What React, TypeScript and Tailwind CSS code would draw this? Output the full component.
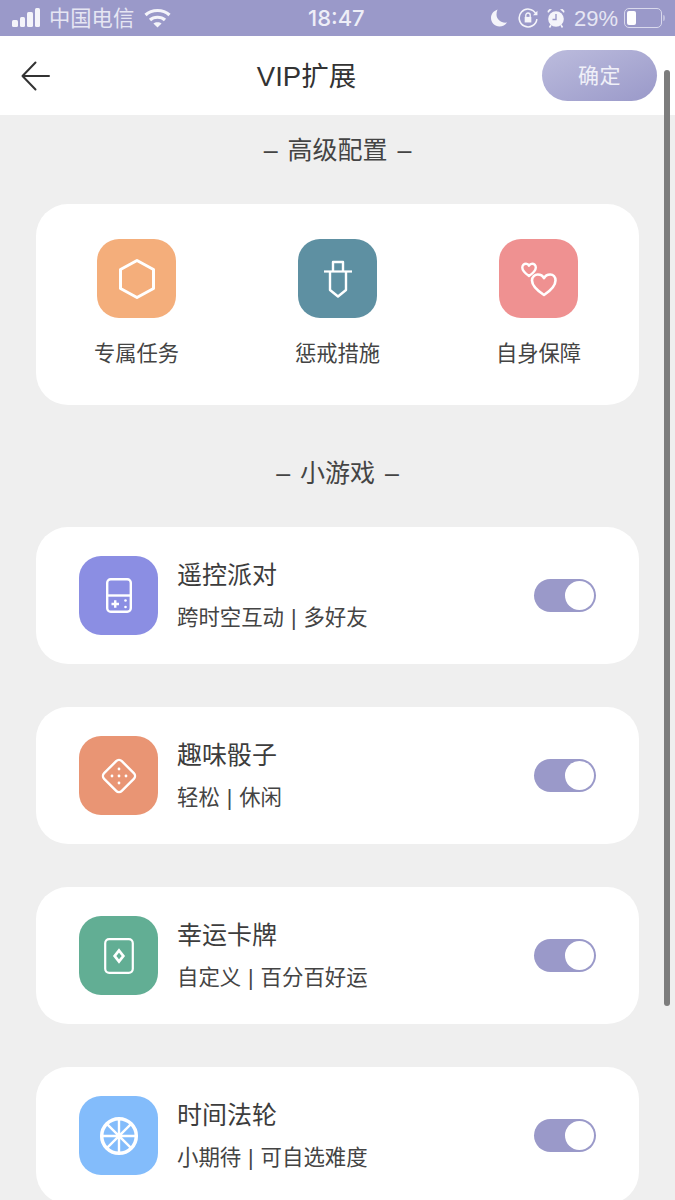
const fontStack = "font-['Liberation_Sans','Noto_Sans_CJK_SC',sans-serif]";

function BackArrow() {
  return (
    <svg width="29" height="30" viewBox="0 0 29 30" fill="none" stroke="#333" strokeWidth="2" strokeLinecap="round" strokeLinejoin="round">
      <path d="M14.5 1.5 L1.5 15 L14.5 28.5 M1.5 15 H28" />
    </svg>
  );
}

function HexIcon() {
  return (
    <svg width="38" height="42" viewBox="0 0 38 42" fill="none" stroke="white" strokeWidth="3" strokeLinejoin="round">
      <path d="M19 2.5 L35.5 11.5 V30.5 L19 39.5 L2.5 30.5 V11.5 Z" />
    </svg>
  );
}

function SwordIcon() {
  return (
    <svg width="30" height="38" viewBox="0 0 30 38" fill="none" stroke="white" strokeWidth="2.4" strokeLinejoin="round">
      <path d="M10 11 V2 H20 V11" />
      <path d="M1 11.5 H29" strokeWidth="2.2" />
      <path d="M7 11.5 V30 L15 36.5 L23 30 V11.5" />
    </svg>
  );
}

function HeartsIcon() {
  return (
    <svg width="36" height="38" viewBox="0 0 36 38" fill="none" stroke="white" strokeLinejoin="round">
      <path strokeWidth="2.4" d="M8 16 C3 12.5 1.3 10 1.3 7.5 C1.3 5.1 3.2 3.7 5 3.7 C6.4 3.7 7.5 4.5 8 5.7 C8.6 4.5 9.8 3.7 11.2 3.7 C13 3.7 14.8 5.1 14.8 7.5 C14.8 10 13 12.5 8 16 Z" />
      <path strokeWidth="2.6" d="M23 35 C14 29 11 25 11 20.5 C11 16.8 13.8 14.5 16.8 14.5 C19.4 14.5 21.8 15.8 23 18.2 C24.2 15.8 26.6 14.5 29.2 14.5 C32.2 14.5 34.5 16.8 34.5 20.5 C34.5 25 32 29 23 35 Z" />
    </svg>
  );
}

function GameIcon() {
  return (
    <svg width="26" height="35" viewBox="0 0 26 35" fill="none" stroke="white" strokeWidth="2.4">
      <rect x="1.2" y="1.2" width="23.6" height="32.6" rx="3.5" />
      <path d="M1.2 17.5 H24.8" />
      <path d="M5.5 26 H13 M9.25 22.2 V29.8" />
      <circle cx="19.5" cy="22.5" r="1.3" fill="white" stroke="none" />
      <circle cx="19.5" cy="29" r="1.3" fill="white" stroke="none" />
    </svg>
  );
}

function DiceIcon() {
  return (
    <svg width="38" height="38" viewBox="0 0 38 38" fill="none" stroke="white" strokeWidth="2.4">
      <rect x="6.5" y="6.5" width="25" height="25" rx="4" transform="rotate(45 19 19)" />
      <g fill="white" stroke="none">
        <circle cx="19" cy="12" r="1.4" />
        <circle cx="12" cy="19" r="1.4" />
        <circle cx="19" cy="19" r="1.4" />
        <circle cx="26" cy="19" r="1.4" />
        <circle cx="19" cy="26" r="1.4" />
      </g>
    </svg>
  );
}

function CardIcon() {
  return (
    <svg width="30" height="36" viewBox="0 0 30 36" fill="none" stroke="white" strokeWidth="2.2">
      <rect x="1.2" y="1.2" width="27.6" height="33.6" rx="4" />
      <path d="M15 12.5 L19.3 18 L15 23.5 L10.7 18 Z" strokeWidth="2.8" />
    </svg>
  );
}

function WheelIcon() {
  return (
    <svg width="40" height="40" viewBox="0 0 40 40" fill="none" stroke="white" strokeWidth="2.4">
      <circle cx="20" cy="20" r="17.3" strokeWidth="3.5" />
      <path d="M20 2 V38 M2 20 H38 M7.3 7.3 L32.7 32.7 M32.7 7.3 L7.3 32.7" />
    </svg>
  );
}

function StatusBar() {
  return (
    <div className="relative h-9 bg-[#9a99c9] flex items-center justify-between pl-3 pr-[10px] text-[#e6e6f3] text-[21px]">
      <div className="flex items-center">
        <div className="flex items-end gap-[2px] h-[19px]">
          <span className="w-[5.5px] h-[7px] rounded-[1.5px] bg-[#f4f4fa]" />
          <span className="w-[5.5px] h-[10px] rounded-[1.5px] bg-[#f4f4fa]" />
          <span className="w-[5.5px] h-[15px] rounded-[1.5px] bg-[#f4f4fa]" />
          <span className="w-[5.5px] h-[19px] rounded-[1.5px] bg-[#f4f4fa]" />
        </div>
        <span className="ml-[9px] mt-[4px] text-[21.3px] leading-none">中国电信</span>
        <svg className="ml-[10px]" width="27" height="20" viewBox="0 0 27 20" fill="none" stroke="#f4f4fa" strokeWidth="3.2">
          <path d="M1.5 7 C8 1 19 1 25.5 7" />
          <path d="M6 12 C10 8.3 17 8.3 21 12" />
          <path d="M13.5 19.5 L9.4 15.6 C11.5 13.8 15.5 13.8 17.6 15.6 Z" fill="#f4f4fa" stroke="none" />
        </svg>
      </div>
      <span className="absolute left-[308px] font-['Inter'] font-medium text-[22px] leading-none text-[#eeeef7]">18:47</span>
      <div className="flex items-center">
        <svg width="18" height="18" viewBox="0 0 17 18" fill="#f4f4fa">
          <path d="M7 0.5 C3 2 0.5 5 0.5 9 C0.5 13.8 4.3 17.5 9 17.5 C12 17.5 14.8 16 16.5 13.5 C11 14.5 6 10.5 6 5.5 C6 3.8 6.3 2 7 0.5 Z" />
        </svg>
        <svg className="ml-[10px]" width="20" height="20" viewBox="0 0 18 18" fill="none" stroke="#f4f4fa" strokeWidth="1.4">
          <path d="M16 5 A8 8 0 1 0 17 10" />
          <path d="M17.5 2.5 V6.5 H13.5" fill="#f4f4fa" stroke="none" />
          <rect x="6" y="8" width="6" height="5" fill="#f4f4fa" stroke="none" />
          <path d="M7 8 V6.5 A2 2 0 0 1 11 6.5 V8" strokeWidth="1.2" />
        </svg>
        <svg className="ml-[9px]" width="18" height="20" viewBox="0 0 18 20" fill="#f4f4fa">
          <circle cx="9" cy="11" r="7.8" />
          <path d="M1 5 L5 1.2 L2.5 1 L0.5 3 Z" />
          <path d="M17 5 L13 1.2 L15.5 1 L17.5 3 Z" />
          <path d="M9 6 V11.5 H5.5" fill="none" stroke="#9a99c9" strokeWidth="1.4" />
          <path d="M4 17 L2.5 19.5 M14 17 L15.5 19.5" fill="none" stroke="#f4f4fa" strokeWidth="1.6" />
        </svg>
        <span className="ml-[9px] mt-[2px] text-[22px] leading-none">29%</span>
        <div className="ml-[6px] w-[38px] h-[20px] rounded-[5px] border border-[#d9d9ec] p-[2px]">
          <div className="w-[9px] h-full rounded-[2px] bg-white" />
        </div>
        <div className="ml-[1px] w-[2px] h-[6px] rounded-r bg-[#c0c0de]" />
      </div>
    </div>
  );
}

function SectionTitle({ text }: { text: string }) {
  return (
    <div className="text-center text-[25px] leading-[32px] text-[#444] [word-spacing:3px]">
      – {text} –
    </div>
  );
}

function IconBox({ color, children }: { color: string; children: React.ReactNode }) {
  return (
    <div className={`w-[79px] h-[79px] rounded-[22px] flex items-center justify-center shrink-0 ${color}`}>
      {children}
    </div>
  );
}

function Toggle() {
  return (
    <div className="w-[62px] h-[33px] rounded-full bg-[#9a99c9] p-[2px] flex justify-end">
      <div className="w-[29px] h-[29px] rounded-full bg-white" />
    </div>
  );
}

const configs = [
  { label: '专属任务', color: 'bg-[#f4ae7b]', icon: <HexIcon /> },
  { label: '惩戒措施', color: 'bg-[#5e90a2]', icon: <SwordIcon /> },
  { label: '自身保障', color: 'bg-[#ef9191]', icon: <HeartsIcon /> },
];

const games = [
  { title: '遥控派对', desc: '跨时空互动 | 多好友', color: 'bg-[#8b8ee3]', icon: <GameIcon /> },
  { title: '趣味骰子', desc: '轻松 | 休闲', color: 'bg-[#e99574]', icon: <DiceIcon /> },
  { title: '幸运卡牌', desc: '自定义 | 百分百好运', color: 'bg-[#62ae94]', icon: <CardIcon /> },
  { title: '时间法轮', desc: '小期待 | 可自选难度', color: 'bg-[#83bcfb]', icon: <WheelIcon /> },
];

export default function App() {
  return (
    <div className={`relative h-[1200px] overflow-hidden bg-[#efefef] ${fontStack}`}>
      <StatusBar />

      <div className="relative h-[79px] bg-white flex items-center justify-between pl-[21px] pr-[18px]">
        <BackArrow />
        <div className="absolute left-0 right-[62px] pt-[2px] text-center text-[27.5px] leading-none text-[#333] pointer-events-none">VIP扩展</div>
        <button className="w-[115px] h-[51px] rounded-full bg-gradient-to-br from-[#bcbcdd] to-[#9a99c9] text-[#f0f0f8] text-[21px] tracking-[0.5px]">
          确定
        </button>
      </div>

      <div className="pt-[19px] px-9">
        <SectionTitle text="高级配置" />

        <div className="mt-[38px] h-[201px] rounded-[32px] bg-white flex justify-between px-[58px] pt-[35px]">
          {configs.map(item => (
            <div key={item.label} className="flex flex-col items-center w-[85px]">
              <IconBox color={item.color}>{item.icon}</IconBox>
              <div className="mt-[21px] text-[21.3px] leading-[30px] text-[#444] whitespace-nowrap">{item.label}</div>
            </div>
          ))}
        </div>

        <div className="mt-[52px]">
          <SectionTitle text="小游戏" />
        </div>

        <div className="mt-[38px] flex flex-col gap-[43px]">
          {games.map(game => (
            <div key={game.title} className="h-[137px] rounded-[32px] bg-white flex items-center pl-[43px] pr-[43px]">
              <IconBox color={game.color}>{game.icon}</IconBox>
              <div className="ml-[19px] flex-1 pb-[2px]">
                <div className="text-[25px] leading-[36px] text-[#3d3d3d]">{game.title}</div>
                <div className="mt-[10px] text-[21.4px] leading-[30px] text-[#444] [word-spacing:1px]">{game.desc}</div>
              </div>
              <Toggle />
            </div>
          ))}
        </div>
      </div>

      {/* scrollbar thumb */}
      <div className="absolute left-[664px] top-[70px] w-[6px] h-[936px] rounded-full bg-[#7d7d7d]" />
    </div>
  );
}
